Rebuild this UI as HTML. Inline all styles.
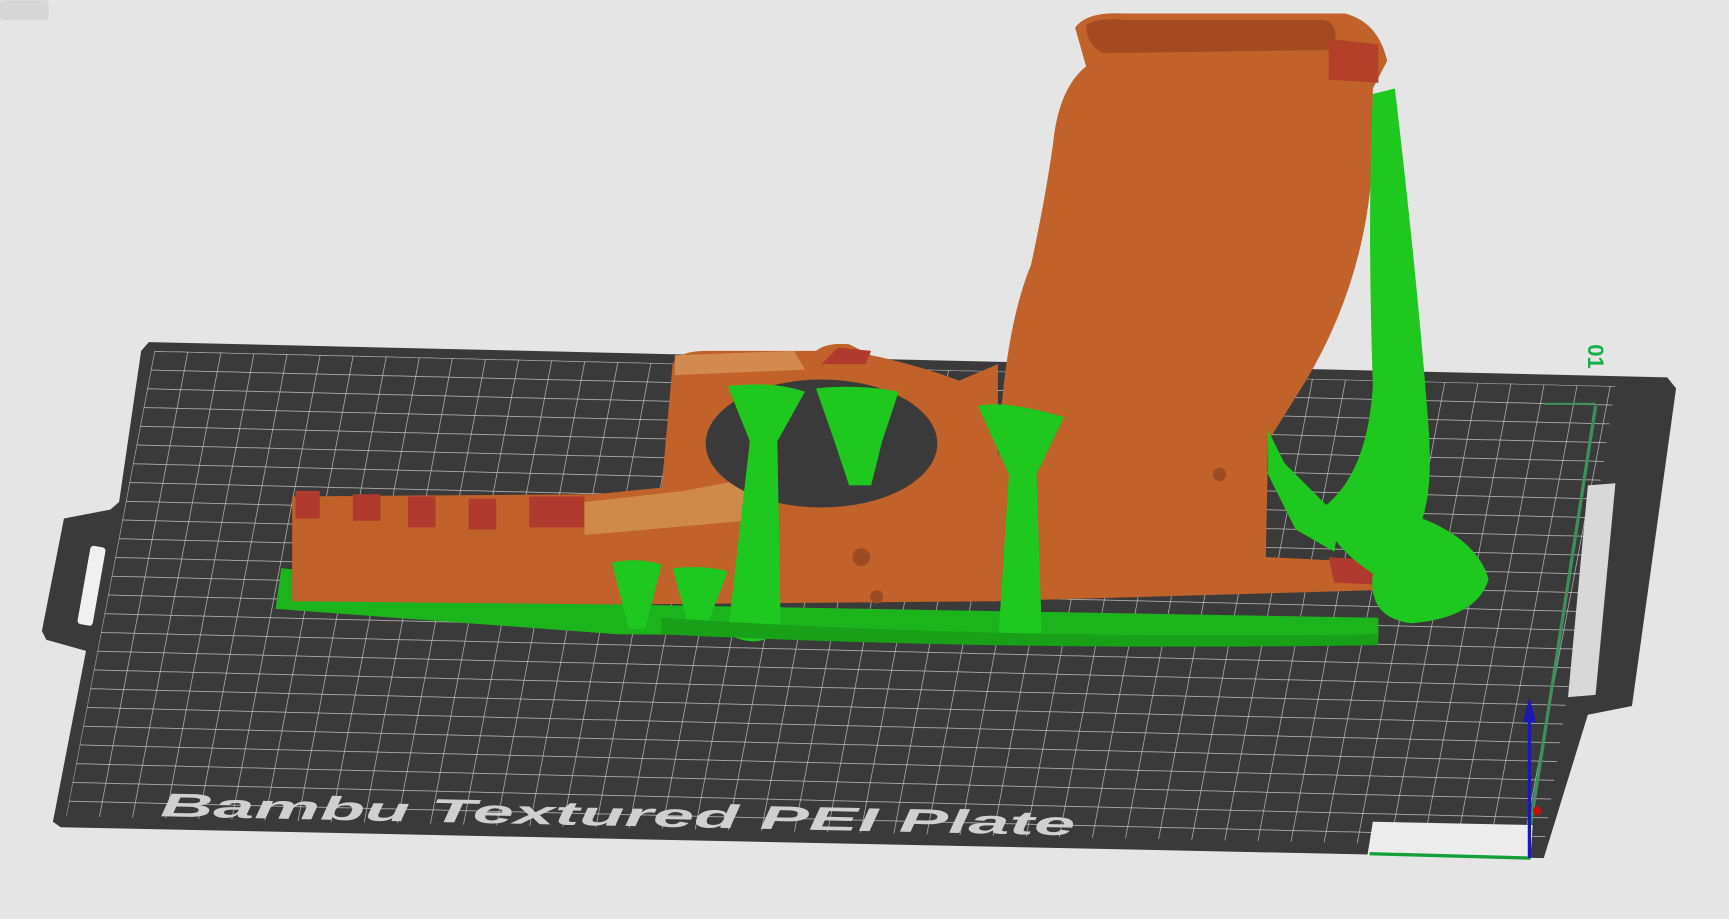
<!DOCTYPE html>
<html><head><meta charset="utf-8"><style>
html,body{margin:0;padding:0;width:1729px;height:919px;overflow:hidden;background:#e5e5e5}
svg{display:block}
</style></head><body>
<svg width="1729" height="919" viewBox="0 0 1568 833" xmlns="http://www.w3.org/2000/svg">
<defs>
<pattern id="g" width="30" height="17" patternUnits="userSpaceOnUse" patternTransform="matrix(1,0.024,-0.19,1,140,318)">
<path d="M0,0 H30 M0,0 V17" fill="none" stroke="#c4c4c4" stroke-width="1.2"/>
</pattern>
<clipPath id="pc"><polygon points="140,318 1465,350 1400,768 60,740"/></clipPath>
</defs>
<rect width="1568" height="833" fill="#e5e5e5"/>
<rect x="0" y="0" width="44" height="18" rx="3" fill="#d6d6d6"/>
<polygon points="135,310 1512,342 1520,352 1480,640 1440,648 1400,778 55,750 48,745 78,590 42,580 38,572 58,470 100,462 108,455 128,318" fill="#3a3a3a"/>
<rect x="76" y="495" width="14" height="72" rx="3" fill="#f0f0f0" transform="rotate(10 83 531)"/>
<g clip-path="url(#pc)"><rect x="0" y="250" width="1568" height="600" fill="url(#g)"/></g>
<line x1="1447" y1="368" x2="1388" y2="748" stroke="#3f8f5c" stroke-width="3"/>
<line x1="1400" y1="366" x2="1447" y2="366" stroke="#3f8f5c" stroke-width="2"/>
<polygon points="1440,440 1465,438 1447,630 1422,632" fill="#d8d8d8"/>
<text x="1440" y="312" font-family="Liberation Sans,sans-serif" font-size="20" font-weight="bold" fill="#16b04a" transform="rotate(90 1440 312)">01</text>
<polygon points="1245,745 1390,748 1388,778 1240,776" fill="#ececec"/>
<line x1="1242" y1="774" x2="1388" y2="778" stroke="#13a03c" stroke-width="3"/>
<line x1="1387" y1="778" x2="1387" y2="650" stroke="#1a1ab0" stroke-width="3"/>
<polygon points="1381,655 1387,632 1393,655" fill="#1a1ab0"/>
<circle cx="1394" cy="735" r="4" fill="#c01010"/>
<text x="145" y="740" font-family="Liberation Sans,sans-serif" font-size="30" font-weight="bold" font-style="italic" fill="#d0d0d0" transform="rotate(1.2 145 740)" textLength="830" lengthAdjust="spacingAndGlyphs">Bambu Textured PEI Plate</text>
<path d="M255,515 L560,548 L1250,560 L1250,580 L560,575 L250,552 Z" fill="#1cb41c"/>
<path d="M975,25 Q985,10 1020,12 L1220,12 Q1250,20 1258,55 L1245,80 L1245,140 Q1240,260 1175,360 L1150,400 L1148,505 L1250,510 L1250,535 L900,545 L905,420 Q910,300 935,240 Q948,180 955,130 Q960,80 985,60 Z" fill="#c0622a"/>
<path d="M985,22 Q1000,15 1020,18 L1200,18 Q1215,20 1210,45 L1000,48 Q985,40 985,22Z" fill="#a34a20"/>
<path d="M1205,35 L1250,40 L1250,75 L1205,72Z" fill="#b5402a"/>
<path d="M265,450 L540,448 L600,442 L610,330 Q615,318 640,318 L740,318 Q750,310 770,312 L790,322 Q830,330 870,345 L905,330 L905,545 L560,548 L265,545 Z" fill="#c0622a"/>
<path d="M268,445 L290,445 L290,470 L268,470Z M320,448 L345,448 L345,472 L320,472Z M370,450 L395,450 L395,478 L370,478Z M425,452 L450,452 L450,480 L425,480Z M480,450 L530,450 L530,478 L480,478Z" fill="#b03a2e"/>
<path d="M530,455 L620,445 L700,430 L700,470 L530,485Z" fill="#cf8a4a"/>
<path d="M612,322 L720,318 L730,335 L612,340Z" fill="#d28a50"/>
<ellipse cx="745" cy="402" rx="105" ry="58" fill="#3a3a3a"/>
<path d="M760,315 L790,318 L785,330 L745,330Z" fill="#b03a2e"/>
<circle cx="781" cy="505" r="8" fill="#9c4c22"/>
<circle cx="795" cy="541" r="6" fill="#9c4c22"/>
<circle cx="1106" cy="430" r="6" fill="#9c4c22"/>
<path d="M1205,505 L1250,508 L1250,530 L1210,528Z" fill="#b03a2e"/>
<g fill="#1ec81e">
<path d="M1245,85 L1265,80 Q1285,250 1295,380 Q1300,440 1290,470 Q1340,490 1350,525 Q1340,560 1280,565 Q1240,560 1245,520 Q1200,490 1200,460 Q1240,430 1245,350 Q1240,200 1245,85Z"/>
<path d="M1150,390 L1165,420 L1215,470 L1210,500 L1175,480 L1150,430Z"/>
<path d="M887,368 Q910,362 965,378 L940,430 L945,580 L905,585 L915,430 Z"/>
<path d="M740,352 Q780,348 815,355 L800,400 L790,440 L770,440 L755,395Z"/>
<path d="M660,350 Q700,345 730,355 L705,400 L708,570 Q690,590 660,575 L680,400Z"/>
<path d="M555,510 Q580,505 600,512 L585,570 L570,570Z"/>
<path d="M610,515 Q640,512 660,518 L640,570 L625,570Z"/>
</g>
<path d="M600,560 Q900,580 1250,575 L1250,585 Q900,590 600,575Z" fill="#19a019"/>
</svg>
</body></html>
